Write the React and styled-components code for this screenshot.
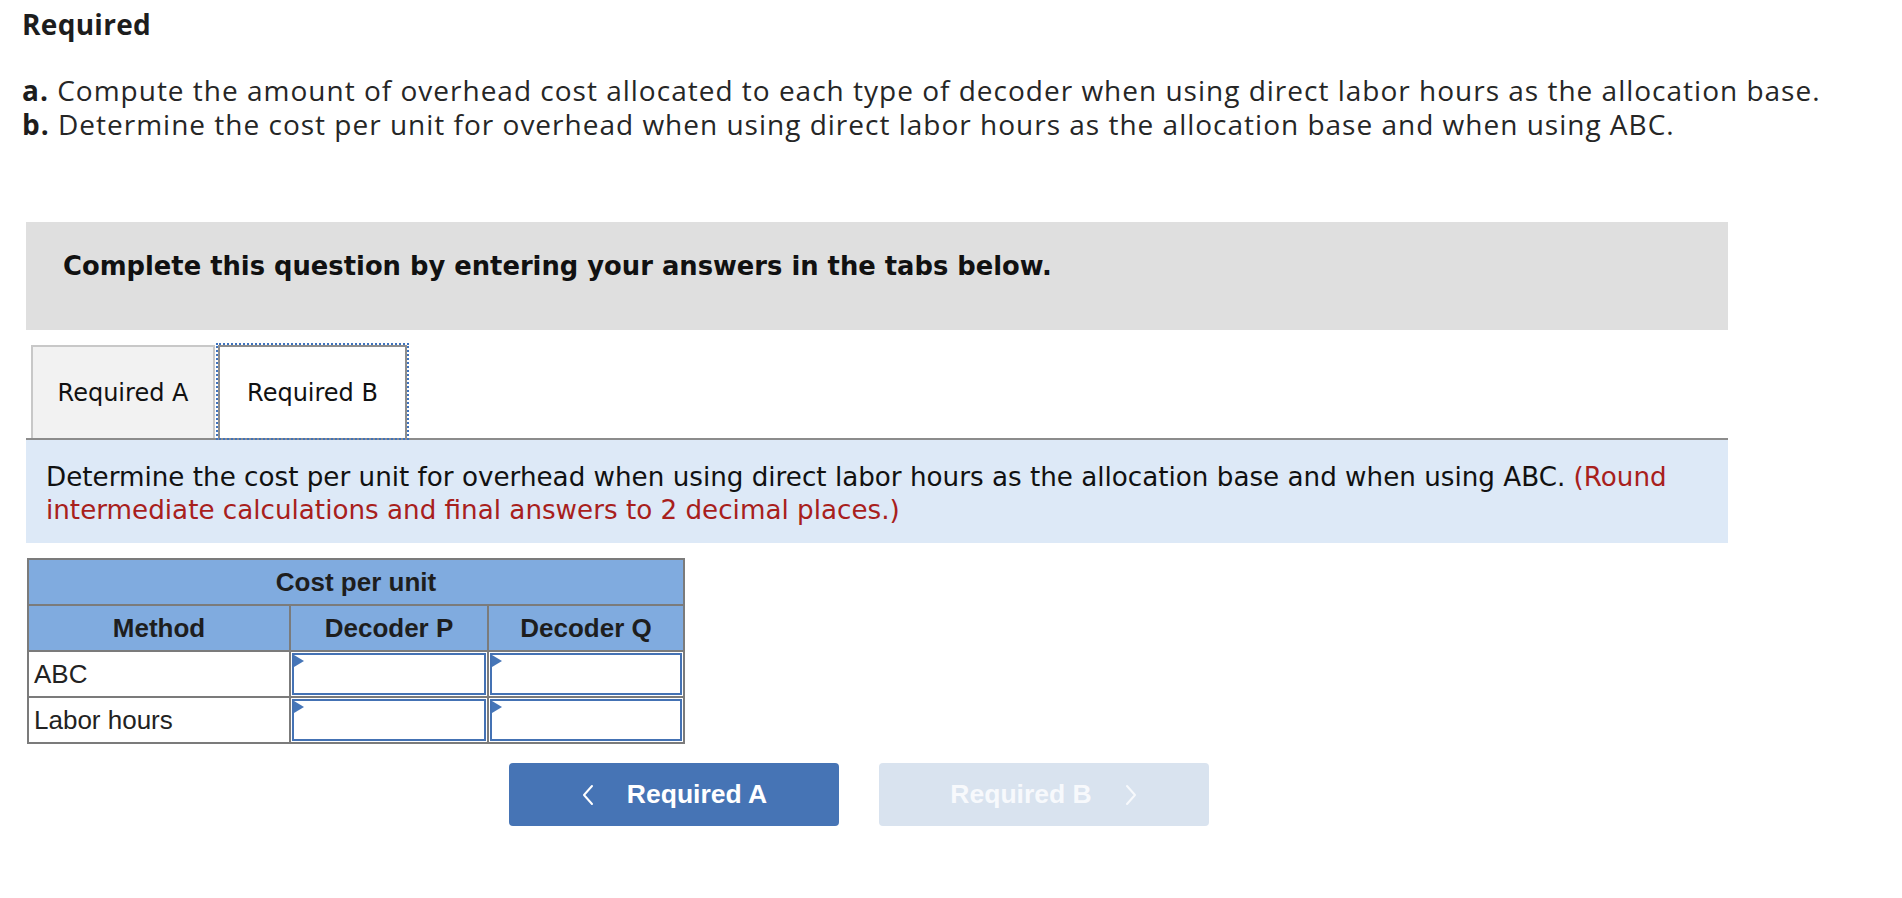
import React from 'react';
import styled, { createGlobalStyle } from 'styled-components';

const GlobalStyle = createGlobalStyle`
  html,
  body {
    margin: 0;
    padding: 0;
    background: #ffffff;
  }
  body {
    font-family: 'Open Sans', sans-serif;
    color: #222222;
  }
`;

const Page = styled.div`
  width: 1902px;
  height: 898px;
  overflow: hidden;
  box-sizing: border-box;
  padding: 5px 0 0 22px;
`;

const Heading = styled.h2`
  margin: 0;
  font-family: 'Open Sans', sans-serif;
  font-size: 28px;
  font-weight: 700;
  letter-spacing: 0.3px;
  line-height: 38px;
  color: #1d1d1d;
`;

const Requirements = styled.div`
  margin-top: 30px;
  font-size: 28px;
  letter-spacing: 1px;
  line-height: 34px;
  color: #262626;
  b {
    font-weight: 700;
    color: #1d1d1d;
  }
`;

const Panel = styled.section`
  margin: 81px 0 0 4px;
  width: 1702px;
`;

const Banner = styled.div`
  height: 108px;
  box-sizing: border-box;
  padding: 28px 0 0 37px;
  background: #dfdfdf;
  font-family: 'DejaVu Sans', sans-serif;
  font-size: 25.8px;
  font-weight: 700;
  line-height: 32px;
  color: #111111;
`;

const TabList = styled.div`
  display: flex;
  align-items: flex-end;
  margin-top: 15px;
  padding-left: 5px;
  border-bottom: 2px solid #8c8c8c;
`;

const Tab = styled.button`
  box-sizing: border-box;
  height: 93px;
  width: ${(p) => p.$width}px;
  margin-left: ${(p) => (p.$active ? 3 : 0)}px;
  padding: 0;
  border: 2px solid ${(p) => (p.$active ? '#8e8e8e' : '#c8c8c8')};
  border-bottom: none;
  background: ${(p) => (p.$active ? '#ffffff' : '#f2f2f2')};
  outline: ${(p) => (p.$active ? '2px dotted #3f73bd' : 'none')};
  font-family: 'DejaVu Sans', sans-serif;
  font-size: 24px;
  color: #111111;
  cursor: pointer;
`;

const Instructions = styled.div`
  padding: 21px 20px 16px 20px;
  background: #dde9f7;
  font-family: 'DejaVu Sans', sans-serif;
  font-size: 26.2px;
  line-height: 33px;
  color: #111111;
`;

const Note = styled.span`
  color: #a8201c;
`;

const Table = styled.table`
  margin: 15px 0 0 1px;
  width: 656px;
  border-collapse: collapse;
  border: 2px solid #7b7b7b;
  font-family: 'Liberation Sans', Arial, sans-serif;
  font-size: 26px;
  color: #222222;
  table-layout: fixed;
`;

const Row = styled.tr`
  height: 46px;
`;

const HeadCell = styled.th`
  padding: 0;
  background: #80abdf;
  border: 2px solid #7b7b7b;
  font-weight: 700;
  text-align: center;
  color: #1e1e1e;
`;

const LabelCell = styled.td`
  padding: 0 0 0 5px;
  border: 2px solid #7b7b7b;
  background: #ffffff;
  text-align: left;
`;

const InputCell = styled.td`
  padding: 1px;
  border: 2px solid #7b7b7b;
  background: #ffffff;
`;

const AnswerBox = styled.div`
  position: relative;
  height: 38px;
  border: 2px solid #4472b4;
  background: #ffffff;
  &::before {
    content: '';
    position: absolute;
    top: 0;
    left: 0;
    border-style: solid;
    border-width: 6px 0 6px 10px;
    border-color: transparent transparent transparent #4676b8;
  }
`;

const Nav = styled.div`
  display: flex;
  gap: 40px;
  margin-top: 19px;
  padding-left: 483px;
`;

const NavButton = styled.button`
  display: flex;
  align-items: center;
  justify-content: center;
  gap: 33px;
  width: 330px;
  height: 63px;
  padding: 0;
  border: none;
  border-radius: 4px;
  background: ${(p) => (p.$disabled ? '#d9e3ef' : '#4674b5')};
  color: ${(p) => (p.$disabled ? '#f7f9fc' : '#ffffff')};
  font-family: 'Liberation Sans', Arial, sans-serif;
  font-size: 26.5px;
  font-weight: 700;
  cursor: ${(p) => (p.$disabled ? 'default' : 'pointer')};
`;

const Chevron = ({ dir }) => (
  <svg width="13" height="22" viewBox="0 0 13 22" fill="none">
    <polyline
      points={dir === 'left' ? '11,2 3,11 11,20' : '2,2 10,11 2,20'}
      stroke="currentColor"
      strokeWidth="2"
      strokeLinecap="round"
      strokeLinejoin="round"
    />
  </svg>
);

const rows = ['ABC', 'Labor hours'];

const App = () => (
  <Page>
    <GlobalStyle />
    <Heading>Required</Heading>
    <Requirements>
      <div>
        <b>a.</b> Compute the amount of overhead cost allocated to each type of
        decoder when using direct labor hours as the allocation base.
      </div>
      <div>
        <b>b.</b> Determine the cost per unit for overhead when using direct
        labor hours as the allocation base and when using ABC.
      </div>
    </Requirements>
    <Panel>
      <Banner>
        Complete this question by entering your answers in the tabs below.
      </Banner>
      <TabList>
        <Tab $width={184}>Required A</Tab>
        <Tab $width={189} $active>
          Required B
        </Tab>
      </TabList>
      <Instructions>
        Determine the cost per unit for overhead when using direct labor hours
        as the allocation base and when using ABC.{' '}
        <Note>
          (Round intermediate calculations and final answers to 2 decimal
          places.)
        </Note>
      </Instructions>
      <Table>
        <colgroup>
          <col style={{ width: 262 }} />
          <col style={{ width: 198 }} />
          <col style={{ width: 196 }} />
        </colgroup>
        <thead>
          <Row>
            <HeadCell colSpan={3}>Cost per unit</HeadCell>
          </Row>
          <Row>
            <HeadCell>Method</HeadCell>
            <HeadCell>Decoder P</HeadCell>
            <HeadCell>Decoder Q</HeadCell>
          </Row>
        </thead>
        <tbody>
          {rows.map((label) => (
            <Row key={label}>
              <LabelCell>{label}</LabelCell>
              <InputCell>
                <AnswerBox />
              </InputCell>
              <InputCell>
                <AnswerBox />
              </InputCell>
            </Row>
          ))}
        </tbody>
      </Table>
      <Nav>
        <NavButton>
          <Chevron dir="left" />
          Required A
        </NavButton>
        <NavButton $disabled>
          Required B
          <Chevron dir="right" />
        </NavButton>
      </Nav>
    </Panel>
  </Page>
);

export default App;
